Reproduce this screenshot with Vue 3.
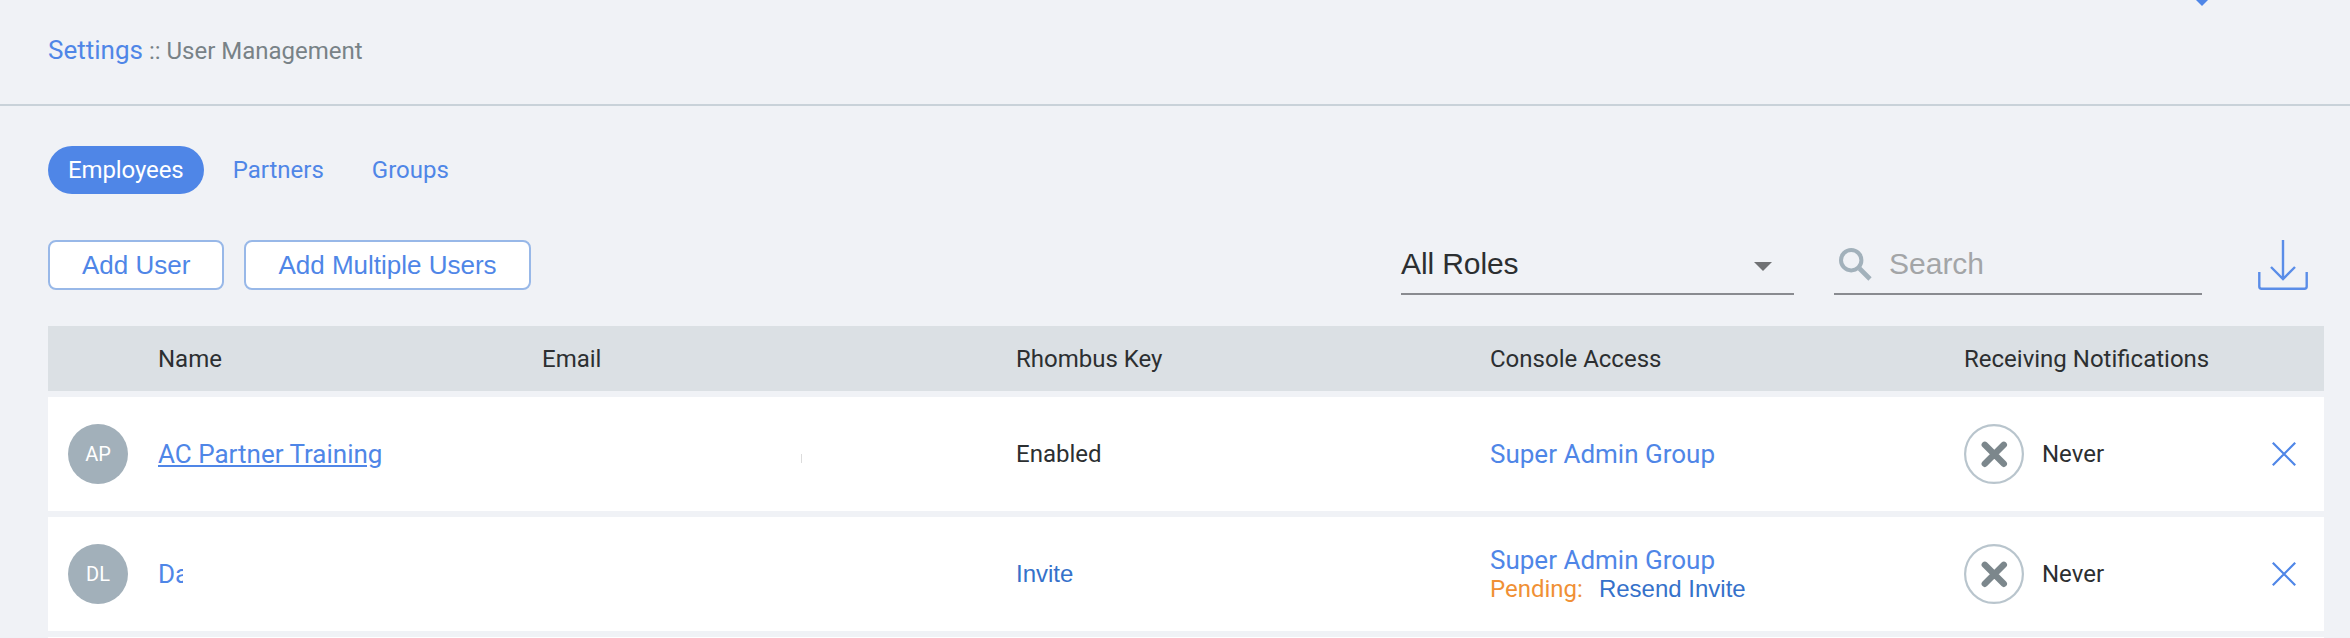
<template>
    <div class="page">
        <header class="topbar">
            <a class="crumb-link">Settings</a>
            <span class="crumb">:: User Management</span>
            <span class="menu-caret"></span>
        </header>

        <main class="content">
            <nav class="tabs">
                <button
                    v-for="tab in tabs"
                    :key="tab"
                    class="tab"
                    :class="{ active: tab === activeTab }"
                    @click="activeTab = tab"
                >{{ tab }}</button>
            </nav>

            <div class="toolbar">
                <button class="btn">Add User</button>
                <button class="btn">Add Multiple Users</button>

                <div class="field roles">
                    <span>All Roles</span>
                    <span class="arrow-down"></span>
                </div>

                <div class="field search">
                    <svg class="search-icon" width="33" height="33" viewBox="0 0 33 33" fill="none" stroke="#a2b1bb">
                        <circle cx="12.2" cy="12.2" r="10.2" stroke-width="4" />
                        <path d="M20.5 20.5 L31 31" stroke-width="4.6" />
                    </svg>
                    <input v-model="query" type="text" placeholder="Search" />
                </div>

                <svg class="download" width="50" height="50" viewBox="0 0 50 50" fill="none" stroke="#5a8de8" stroke-width="2.4">
                    <path d="M25 0 V39 M13 27 L25 39 L37 27" />
                    <path d="M1.3 32 V46.5 Q1.3 48.7 3.5 48.7 H46.5 Q48.7 48.7 48.7 46.5 V32" />
                </svg>
            </div>

            <div class="table">
                <div class="row head">
                    <span></span>
                    <span v-for="col in columns" :key="col">{{ col }}</span>
                </div>

                <div v-for="user in users" :key="user.initials" class="row">
                    <span class="avatar">{{ user.initials }}</span>
                    <div class="name">
                        <a :class="user.hidden ? 'clipped' : 'underlined'">{{ user.name }}</a>
                    </div>
                    <div class="email"><i v-if="!user.hidden" class="mark"></i></div>
                    <div>
                        <span v-if="user.keyEnabled">Enabled</span>
                        <a v-else class="invite">Invite</a>
                    </div>
                    <div class="access">
                        <a class="group">{{ user.group }}</a>
                        <div v-if="user.pending" class="status">
                            <span class="pending">Pending:</span>
                            <a class="invite">Resend Invite</a>
                        </div>
                    </div>
                    <div class="notify">
                        <svg width="60" height="60" viewBox="0 0 60 60" fill="none">
                            <circle cx="30" cy="30" r="28.9" stroke="#b9c5cd" stroke-width="2.2" />
                            <path d="M20.8 20.8 L39.8 39.8 M39.8 20.8 L20.8 39.8" stroke="#7c878c" stroke-width="6.4" stroke-linecap="round" />
                        </svg>
                        <span>Never</span>
                    </div>
                    <svg class="remove" width="24" height="24" viewBox="0 0 24 24" fill="none">
                        <path d="M.8 .8 L23.2 23.2 M23.2 .8 L.8 23.2" stroke="#4f86e7" stroke-width="2.2" />
                    </svg>
                </div>

                <div class="row"></div>
            </div>
        </main>
    </div>
</template>

<script setup>
    import { ref } from 'vue'

    const tabs = ['Employees', 'Partners', 'Groups']
    const activeTab = ref('Employees')
    const query = ref('')

    const columns = ['Name', 'Email', 'Rhombus Key', 'Console Access', 'Receiving Notifications']

    const users = [
        { initials: 'AP', name: 'AC Partner Training', keyEnabled: true, group: 'Super Admin Group' },
        { initials: 'DL', name: 'Da', hidden: true, group: 'Super Admin Group', pending: true },
    ]
</script>

<style>
    body {
        margin: 0;
        overflow: hidden;
    }
</style>

<style scoped>
    .page {
        height: 638px;
        overflow: hidden;
        background: #f0f2f6;
        color: #2c2f31;
        font-family: Roboto, sans-serif;
        font-size: 24px;
        line-height: 28px;
    }

    .topbar {
        position: relative;
        box-sizing: border-box;
        height: 106px;
        padding: 36px 48px 0;
        border-bottom: 2px solid #c9d2d9;
    }

    .crumb-link {
        margin-right: 6px;
        color: #4f86e7;
        font-size: 26px;
    }

    .crumb {
        color: #788287;
    }

    .menu-caret {
        position: absolute;
        top: 0;
        right: 142px;
        border: 6px solid transparent;
        border-top-color: #4f86e7;
        border-bottom: none;
    }

    .content {
        padding: 40px 26px 0 48px;
    }

    .tabs {
        display: flex;
        gap: 8px;
    }

    .tab {
        height: 48px;
        padding: 0 20px;
        border: none;
        border-radius: 24px;
        background: none;
        color: #4f86e7;
        font: inherit;
    }

    .tab.active {
        margin-right: 1px;
        background: #4f86e7;
        color: #fff;
        letter-spacing: -0.1px;
    }

    .toolbar {
        display: flex;
        align-items: flex-start;
        margin-top: 46px;
        height: 86px;
    }

    .btn {
        height: 50px;
        margin-right: 20px;
        padding: 0 32px;
        border: 2px solid #98b8e8;
        border-radius: 8px;
        background: #fff;
        color: #4f86e7;
        font-family: "Liberation Sans", sans-serif;
        font-size: 26px;
    }

    .field {
        box-sizing: border-box;
        display: flex;
        align-items: center;
        height: 55px;
        padding-bottom: 5px;
        border-bottom: 2px solid #898b90;
        font-family: "Liberation Sans", sans-serif;
        font-size: 30px;
        letter-spacing: -0.1px;
    }

    .roles {
        width: 393px;
        margin-left: auto;
        margin-right: 40px;
        padding-right: 22px;
        justify-content: space-between;
    }

    .arrow-down {
        border: 9.5px solid transparent;
        border-top-color: #707274;
        border-bottom: none;
        margin-top: 4px;
    }

    .search {
        width: 368px;
        padding-left: 5px;
        gap: 17px;
    }

    .search-icon {
        flex: none;
        margin-top: 1px;
    }

    .search input {
        width: 260px;
        padding: 0;
        border: none;
        outline: none;
        background: none;
        font: inherit;
    }

    .search input::placeholder {
        color: #a3a5a7;
    }

    .download {
        margin: 0 16px 0 56px;
    }

    .table {
        display: flex;
        flex-direction: column;
        gap: 6px;
    }

    .row {
        box-sizing: border-box;
        display: grid;
        grid-template-columns: 90px 384px 474px 474px 474px 308px 24px;
        align-items: center;
        height: 114px;
        padding-left: 20px;
        background: #fff;
    }

    .head {
        height: 65px;
        background: #dbe0e4;
    }

    .avatar {
        width: 60px;
        height: 60px;
        border-radius: 50%;
        background: #a2b0ba;
        color: #fff;
        font-size: 20px;
        line-height: 60px;
        text-align: center;
    }

    .name,
    .group {
        color: #4f86e7;
        font-size: 26px;
    }

    .underlined {
        text-decoration: underline;
    }

    .clipped {
        display: block;
        width: 25px;
        overflow: hidden;
    }

    .mark {
        display: block;
        width: 1px;
        height: 9px;
        margin: 8px 0 0 259px;
        background: #dcdcdc;
    }

    .invite {
        color: #3571ca;
        font-family: "Liberation Sans", sans-serif;
    }

    .pending {
        margin-right: 16px;
        color: #f09035;
    }

    .notify {
        display: flex;
        align-items: center;
        gap: 18px;
    }
</style>
